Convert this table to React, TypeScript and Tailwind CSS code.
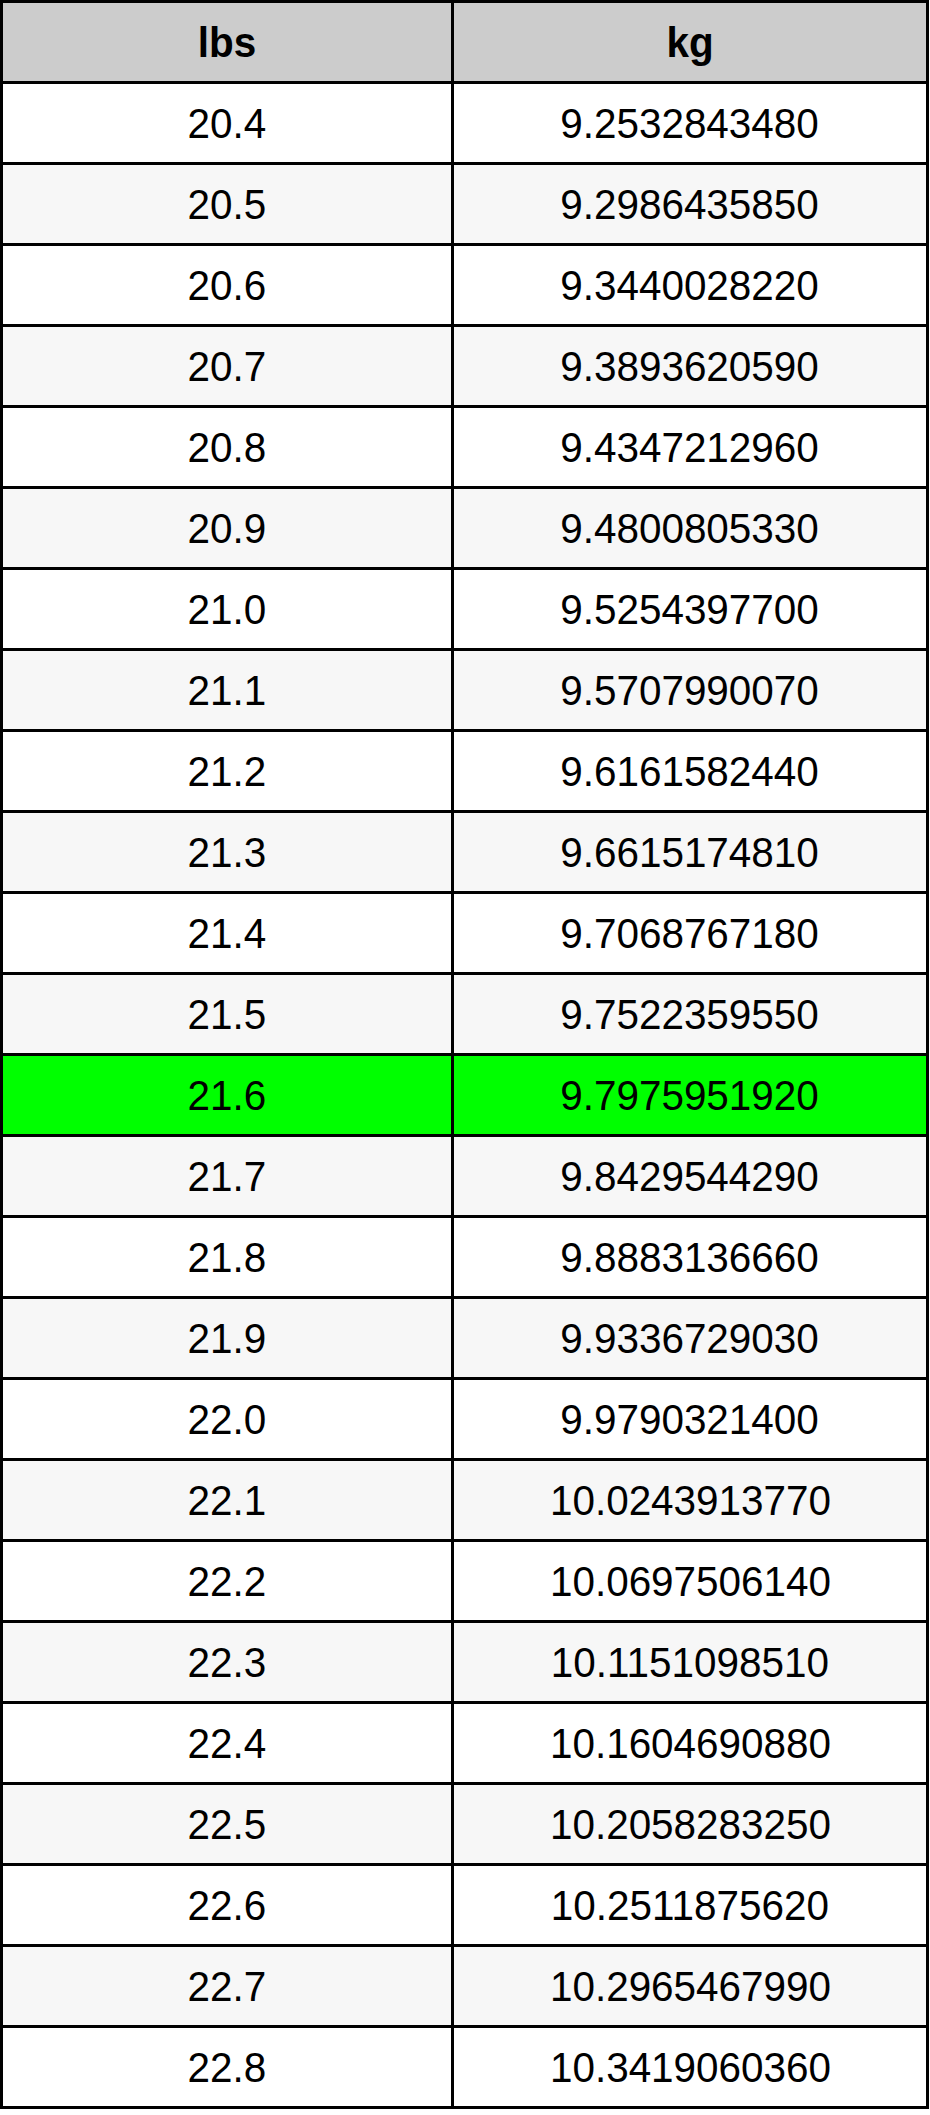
const rows: [string, string][] = [
  ["20.4", "9.2532843480"],
  ["20.5", "9.2986435850"],
  ["20.6", "9.3440028220"],
  ["20.7", "9.3893620590"],
  ["20.8", "9.4347212960"],
  ["20.9", "9.4800805330"],
  ["21.0", "9.5254397700"],
  ["21.1", "9.5707990070"],
  ["21.2", "9.6161582440"],
  ["21.3", "9.6615174810"],
  ["21.4", "9.7068767180"],
  ["21.5", "9.7522359550"],
  ["21.6", "9.7975951920"],
  ["21.7", "9.8429544290"],
  ["21.8", "9.8883136660"],
  ["21.9", "9.9336729030"],
  ["22.0", "9.9790321400"],
  ["22.1", "10.0243913770"],
  ["22.2", "10.0697506140"],
  ["22.3", "10.1151098510"],
  ["22.4", "10.1604690880"],
  ["22.5", "10.2058283250"],
  ["22.6", "10.2511875620"],
  ["22.7", "10.2965467990"],
  ["22.8", "10.3419060360"],
];

const cell =
  "flex h-[81px] items-center justify-center border-r-[3px] border-b-[3px] border-black";

function Text({ children }: { children: string }) {
  return <span className="inline-block scale-x-[0.94]">{children}</span>;
}

export default function App() {
  return (
    <div className="bg-white font-['Liberation_Sans',Arial,sans-serif] text-[43px] text-black">
      <div className="grid w-[929px] grid-cols-[451px_475px] border-t-[3px] border-l-[3px] border-black">
        <div className={`${cell} h-[78px] bg-[#cccccc] font-bold`}>
          <Text>lbs</Text>
        </div>
        <div className={`${cell} h-[78px] bg-[#cccccc] font-bold`}>
          <Text>kg</Text>
        </div>
        {rows.map(([lbs, kg], i) => {
          const bg = lbs === "21.6" ? "bg-[#00ff00]" : i % 2 === 1 ? "bg-[#f7f7f7]" : "bg-white";
          return (
            <div key={lbs} className="contents">
              <div className={`${cell} ${bg}`}>
                <Text>{lbs}</Text>
              </div>
              <div className={`${cell} ${bg}`}>
                <Text>{kg}</Text>
              </div>
            </div>
          );
        })}
      </div>
    </div>
  );
}
